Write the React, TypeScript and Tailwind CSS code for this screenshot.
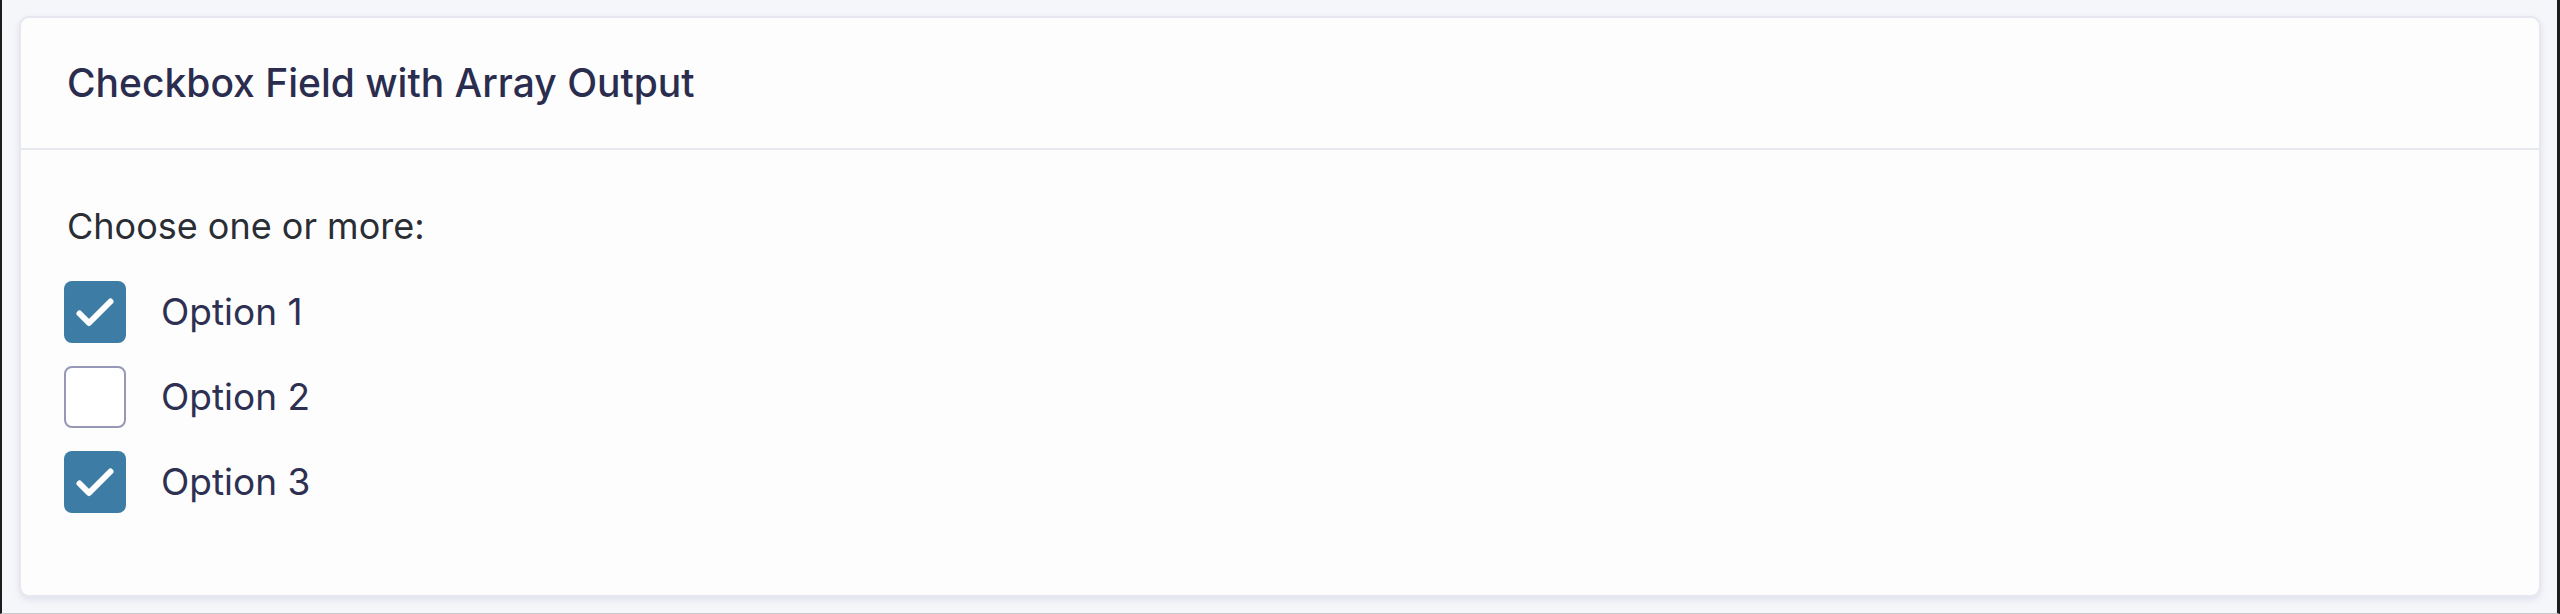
const options = [
  { id: "opt1", label: "Option 1", checked: true },
  { id: "opt2", label: "Option 2", checked: false },
  { id: "opt3", label: "Option 3", checked: true },
];

function CheckboxRow({ label, checked }: { label: string; checked: boolean }) {
  return (
    <label className="flex items-center gap-[35px]">
      {checked ? (
        <span className="flex h-[62px] w-[62px] items-center justify-center rounded-[8px] bg-[#3d7ca4]">
          <svg width="62" height="62" viewBox="0 0 62 62" fill="none">
            <path
              d="M15.5 32.5 L25 42 L46.5 20.5"
              stroke="white"
              strokeWidth="6"
              strokeLinecap="round"
              strokeLinejoin="round"
            />
          </svg>
        </span>
      ) : (
        <span className="h-[62px] w-[62px] rounded-[8px] border-2 border-[#9797b6] bg-white" />
      )}
      <span className="text-[37px] leading-[44px] text-[#2e3052]">{label}</span>
    </label>
  );
}

export default function App() {
  return (
    <div className="h-[614px] w-full border-l-2 border-r-[3px] border-b border-l-[#1c1c1c] border-r-[#1c1c1c] border-b-[#c9c9cc] bg-[#f5f6fa] pl-[17px] pr-[16px] pt-[16px] pb-[16px] font-['Inter',sans-serif]">
      <div className="flex flex-col rounded-[10px] border-2 border-[#e6e7f0] bg-[#fdfdfe] shadow-[0_3px_6px_rgba(200,203,220,0.45)]">
        {/* Header */}
        <div className="flex h-[132px] items-center border-b-2 border-[#e8e9f0] px-[46px]">
          <h2 className="text-[39px] font-medium leading-[48px] text-[#2b2d4f]">
            Checkbox Field with Array Output
          </h2>
        </div>

        {/* Body */}
        <div className="flex flex-col px-[43px] pt-[54px] pb-[82px]">
          <p className="pl-[3px] text-[36px] leading-[44px] text-[#2a2d33]">Choose one or more:</p>
          <div className="mt-[33px] flex flex-col gap-[23px]">
            {options.map((o) => (
              <CheckboxRow key={o.id} label={o.label} checked={o.checked} />
            ))}
          </div>
        </div>
      </div>
    </div>
  );
}
